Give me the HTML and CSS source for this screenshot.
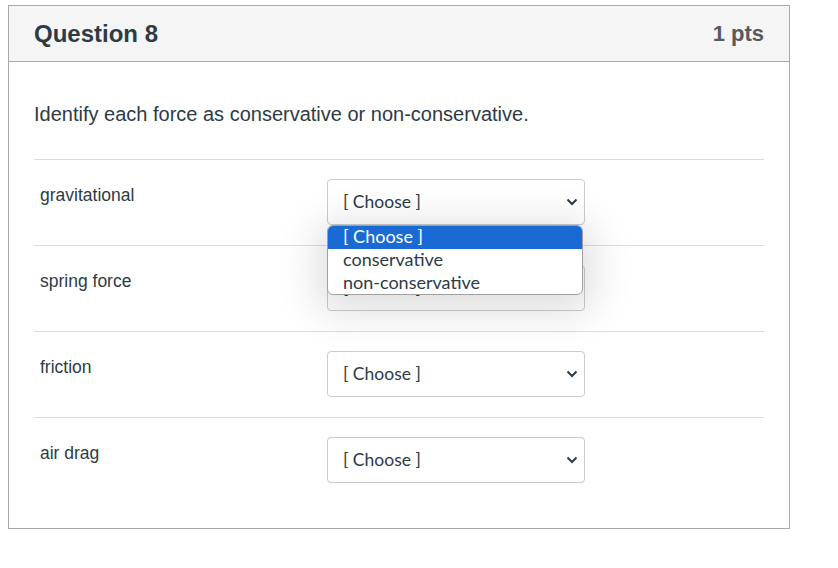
FILE: index.html
```html
<!DOCTYPE html>
<html>
<head>
<meta charset="utf-8">
<link rel="stylesheet" href="styles.css">
</head>
<body>
<div class="card">
  <div class="card-header">
    <h2 class="title">Question 8</h2>
    <div class="pts">1 pts</div>
  </div>
  <div class="card-body">
    <p class="prompt">Identify each force as conservative or non-conservative.</p>
    <div class="rows">
      <div class="row">
        <div class="label">gravitational</div>
        <div class="select-wrap">
          <div class="select"><span>[ Choose ]</span><svg class="chev" width="12" height="8" viewBox="0 0 12 8"><path d="M1.5 1.5 L6 6 L10.5 1.5" fill="none" stroke="#2d3b45" stroke-width="2"/></svg></div>
          <ul class="popup">
            <li class="opt active">[ Choose ]</li>
            <li class="opt">conservative</li>
            <li class="opt">non-conservative</li>
          </ul>
        </div>
      </div>
      <div class="row">
        <div class="label">spring force</div>
        <div class="select-wrap">
          <div class="select"><span>[ Choose ]</span><svg class="chev" width="12" height="8" viewBox="0 0 12 8"><path d="M1.5 1.5 L6 6 L10.5 1.5" fill="none" stroke="#2d3b45" stroke-width="2"/></svg></div>
        </div>
      </div>
      <div class="row">
        <div class="label">friction</div>
        <div class="select-wrap">
          <div class="select"><span>[ Choose ]</span><svg class="chev" width="12" height="8" viewBox="0 0 12 8"><path d="M1.5 1.5 L6 6 L10.5 1.5" fill="none" stroke="#2d3b45" stroke-width="2"/></svg></div>
        </div>
      </div>
      <div class="row">
        <div class="label">air drag</div>
        <div class="select-wrap">
          <div class="select"><span>[ Choose ]</span><svg class="chev" width="12" height="8" viewBox="0 0 12 8"><path d="M1.5 1.5 L6 6 L10.5 1.5" fill="none" stroke="#2d3b45" stroke-width="2"/></svg></div>
        </div>
      </div>
    </div>
  </div>
</div>
</body>
</html>
```
FILE: styles.css
```css
html, body {
  margin: 0;
  padding: 0;
  background: #fff;
}
body {
  padding: 5px 8px;
  font-family: "Liberation Sans", Arial, sans-serif;
  color: #2d3b45;
}
.card {
  width: 780px;
  border: 1px solid #aaaaaa;
  background: #fff;
}
.card-header {
  height: 56px;
  background: #f5f5f5;
  border-bottom: 1px solid #aaaaaa;
  display: flex;
  align-items: center;
  justify-content: space-between;
  padding: 0 25px 0 25px;
  box-sizing: border-box;
}
.title {
  margin: 0;
  font-size: 24px;
  font-weight: bold;
  color: #2d3b45;
}
.pts {
  font-size: 22px;
  font-weight: bold;
  color: #555a5e;
}
.card-body {
  padding: 0 25px 25px 25px;
}
.prompt {
  margin: 0;
  padding: 39px 0 32px 0;
  font-size: 20px;
  line-height: 26px;
}
.row {
  display: flex;
  border-top: 1px solid #dddddd;
  height: 85px;
  padding-left: 6px;
}
.label {
  width: 287px;
  font-size: 17.5px;
  line-height: 20px;
  padding-top: 25px;
}
.select-wrap {
  position: relative;
  padding-top: 19px;
}
.select {
  border: 1px solid #c7cdd1;
  border-radius: 4px;
  display: flex;
  align-items: center;
  justify-content: space-between;
  padding: 0 6px 2px 15px;
  box-sizing: border-box;
  height: 46px;
  width: 258px;
  font-family: Lato, "Liberation Sans", sans-serif;
  font-size: 17.5px;
  color: #2d3b45;
  background: #fff;
}
.chev {
  display: block;
  margin-top: 2px;
}
.popup {
  position: absolute;
  left: 0;
  top: 65px;
  width: 256px;
  margin: 0;
  padding: 0;
  list-style: none;
  background: #fff;
  border: 1px solid #a0a0a0;
  border-radius: 6px;
  overflow: hidden;
  box-sizing: border-box;
  height: 70px;
  box-shadow: 0 8px 40px 10px rgba(0,0,0,0.13);
  font-family: Lato, "Liberation Sans", sans-serif;
  font-size: 18px;
  z-index: 2;
}
.opt {
  height: 23px;
  line-height: 20px;
  padding-left: 15px;
  color: #2d3b45;
}
.opt.active {
  background: #1a6ad6;
  color: #fff;
}
```
